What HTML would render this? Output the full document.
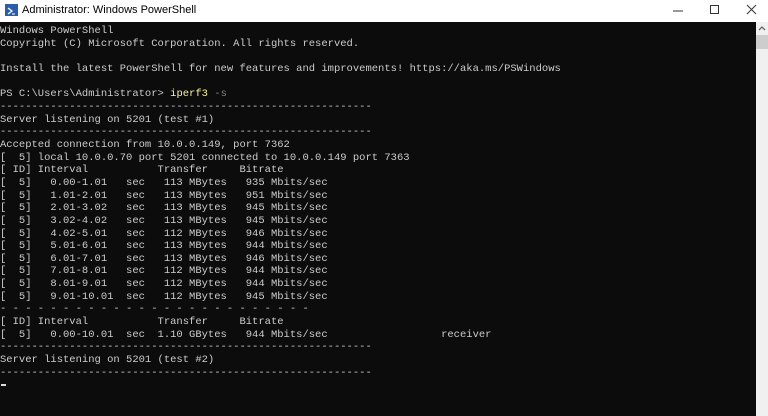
<!DOCTYPE html>
<html><head><meta charset="utf-8"><style>
*{margin:0;padding:0;box-sizing:border-box}
body{width:768px;height:416px;overflow:hidden;background:#fff;position:relative;font-family:"Liberation Sans",sans-serif}
.title{position:absolute;left:0;top:0;width:768px;height:22px;background:#fff;}
.title .t{position:absolute;left:22px;top:4px;font-size:11px;color:#000}
.ico{position:absolute;left:5px;top:4px;width:13px;height:12px;background:#2a5fa8}
.ctl{position:absolute;top:0;height:22px;font-size:13px;color:#222}
.term{position:absolute;left:0;top:22px;width:756px;height:394px;background:#0c0c0c;overflow:hidden}
pre{font-family:"Liberation Mono",monospace;font-size:10.5px;line-height:12.65px;color:#cccccc;position:absolute;left:0;top:3px;white-space:pre}
.sb{position:absolute;left:756px;top:22px;width:12px;height:394px;background:#f0f0f0}
.thumb{position:absolute;left:756px;top:35px;width:12px;height:14px;background:#cdcdcd}
.cur{position:absolute;left:1px;top:384px;width:5px;height:2px;background:#ddd}
</style></head><body>
<div class="title"><div class="ico"><svg width="13" height="12" viewBox="0 0 13 12"><path d="M3 3l4 3-4 3" stroke="#fff" stroke-width="1.3" fill="none"/><path d="M7 9h3" stroke="#fff" stroke-width="1"/></svg></div><div class="t">Administrator: Windows PowerShell</div>
<svg class="ctl" style="left:670px;width:16px" viewBox="0 0 16 22"><path d="M3 11h10" stroke="#333" stroke-width="1"/></svg>
<svg class="ctl" style="left:707px;width:16px" viewBox="0 0 16 22"><rect x="3.5" y="5.5" width="8" height="8" stroke="#333" fill="none"/></svg>
<svg class="ctl" style="left:744px;width:16px" viewBox="0 0 16 22"><path d="M3 5l9 9M12 5l-9 9" stroke="#333" stroke-width="1"/></svg>
</div>
<div class="term"><pre>Windows PowerShell
Copyright (C) Microsoft Corporation. All rights reserved.

Install the latest PowerShell for new features and improvements! https://aka.ms/PSWindows

PS C:\Users\Administrator> <span style="color:#f9f1a5">iperf3</span> <span style="color:#808080">-s</span>
-----------------------------------------------------------
Server listening on 5201 (test #1)
-----------------------------------------------------------
Accepted connection from 10.0.0.149, port 7362
[  5] local 10.0.0.70 port 5201 connected to 10.0.0.149 port 7363
[ ID] Interval           Transfer     Bitrate
[  5]   0.00-1.01   sec   113 MBytes   935 Mbits/sec
[  5]   1.01-2.01   sec   113 MBytes   951 Mbits/sec
[  5]   2.01-3.02   sec   113 MBytes   945 Mbits/sec
[  5]   3.02-4.02   sec   113 MBytes   945 Mbits/sec
[  5]   4.02-5.01   sec   112 MBytes   946 Mbits/sec
[  5]   5.01-6.01   sec   113 MBytes   944 Mbits/sec
[  5]   6.01-7.01   sec   113 MBytes   946 Mbits/sec
[  5]   7.01-8.01   sec   112 MBytes   944 Mbits/sec
[  5]   8.01-9.01   sec   112 MBytes   944 Mbits/sec
[  5]   9.01-10.01  sec   112 MBytes   945 Mbits/sec
- - - - - - - - - - - - - - - - - - - - - - - - -
[ ID] Interval           Transfer     Bitrate
[  5]   0.00-10.01  sec  1.10 GBytes   944 Mbits/sec                  receiver
-----------------------------------------------------------
Server listening on 5201 (test #2)
-----------------------------------------------------------
</pre></div>
<div class="cur"></div>
<div class="sb"></div><div class="thumb"></div>
<svg style="position:absolute;left:757px;top:24px" width="10" height="8" viewBox="0 0 10 8"><path d="M2 6l3-3 3 3" stroke="#666" stroke-width="1.3" fill="none"/></svg>
</body></html>
